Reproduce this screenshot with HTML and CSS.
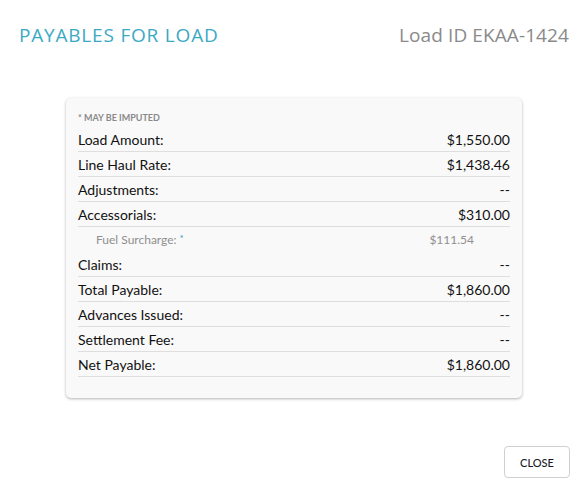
FILE: index.html
```html
<!DOCTYPE html>
<html>
<head>
<meta charset="utf-8">
<link rel="stylesheet" href="styles.css">
</head>
<body>
<div class="modal">
  <div class="header">
    <h1 class="title">PAYABLES FOR LOAD</h1>
    <div class="load-id">Load ID EKAA-1424</div>
  </div>
  <div class="card">
    <div class="note"><span class="star">*</span> MAY BE IMPUTED</div>
    <div class="row"><span>Load Amount:</span><span>$1,550.00</span></div>
    <div class="row"><span>Line Haul Rate:</span><span>$1,438.46</span></div>
    <div class="row"><span>Adjustments:</span><span>--</span></div>
    <div class="row"><span>Accessorials:</span><span>$310.00</span></div>
    <div class="row sub"><span>Fuel Surcharge: <span class="blue">*</span></span><span>$111.54</span></div>
    <div class="row"><span>Claims:</span><span>--</span></div>
    <div class="row"><span>Total Payable:</span><span>$1,860.00</span></div>
    <div class="row"><span>Advances Issued:</span><span>--</span></div>
    <div class="row"><span>Settlement Fee:</span><span>--</span></div>
    <div class="row"><span>Net Payable:</span><span>$1,860.00</span></div>
  </div>
  <div class="footer">
    <button class="close">CLOSE</button>
  </div>
</div>
</body>
</html>
```
FILE: styles.css
```css
html, body { margin: 0; padding: 0; background: #fff; }
body { font-family: "Lato", "Liberation Sans", sans-serif; color: #1a1a1a; }
.modal { width: 587px; height: 496px; box-sizing: border-box; padding: 0; display: flex; flex-direction: column; }
.header { display: flex; justify-content: space-between; align-items: baseline; padding: 22px 18px 0 19px; height: 74px; box-sizing: border-box; }
.title { margin: 0; font-family: "Open Sans", "DejaVu Sans", sans-serif; font-weight: 400; font-size: 19px; letter-spacing: 0.8px; color: #3ba9c4; }
.load-id { font-family: "Open Sans", "DejaVu Sans", sans-serif; font-size: 19px; letter-spacing: 0.1px; color: #8a8a8a; }
.card { margin: 24px 0 0 66px; width: 456px; height: 300px; box-sizing: border-box; background: #f9f9f9; border-radius: 5px; box-shadow: 0 1px 3px rgba(0,0,0,0.3); padding: 13px 12px 0 12px; }
.note { font-size: 9px; font-weight: 700; color: #8a8a8a; height: 16px; line-height: 14px; }
.star { color: #8a8a8a; }
.row { display: flex; justify-content: space-between; align-items: center; height: 24px; border-bottom: 1px solid #dedede; font-size: 14px; color: #111; }
.row.sub { border-bottom: none; font-size: 12px; color: #8f8f8f; padding: 0 36px 0 18px; height: 25px; }
.blue { color: #2b8fc0; font-size: 9px; vertical-align: 2px; }
.footer { display: flex; justify-content: flex-end; padding: 48px 17px 0 0; }
.close { font-family: "Lato", "Liberation Sans", sans-serif; font-size: 11px; font-weight: 500; color: #1a1a2a; background: #fff; border: 1px solid #d0d0d0; border-radius: 4px; width: 66px; height: 32px; padding: 0; }
```
